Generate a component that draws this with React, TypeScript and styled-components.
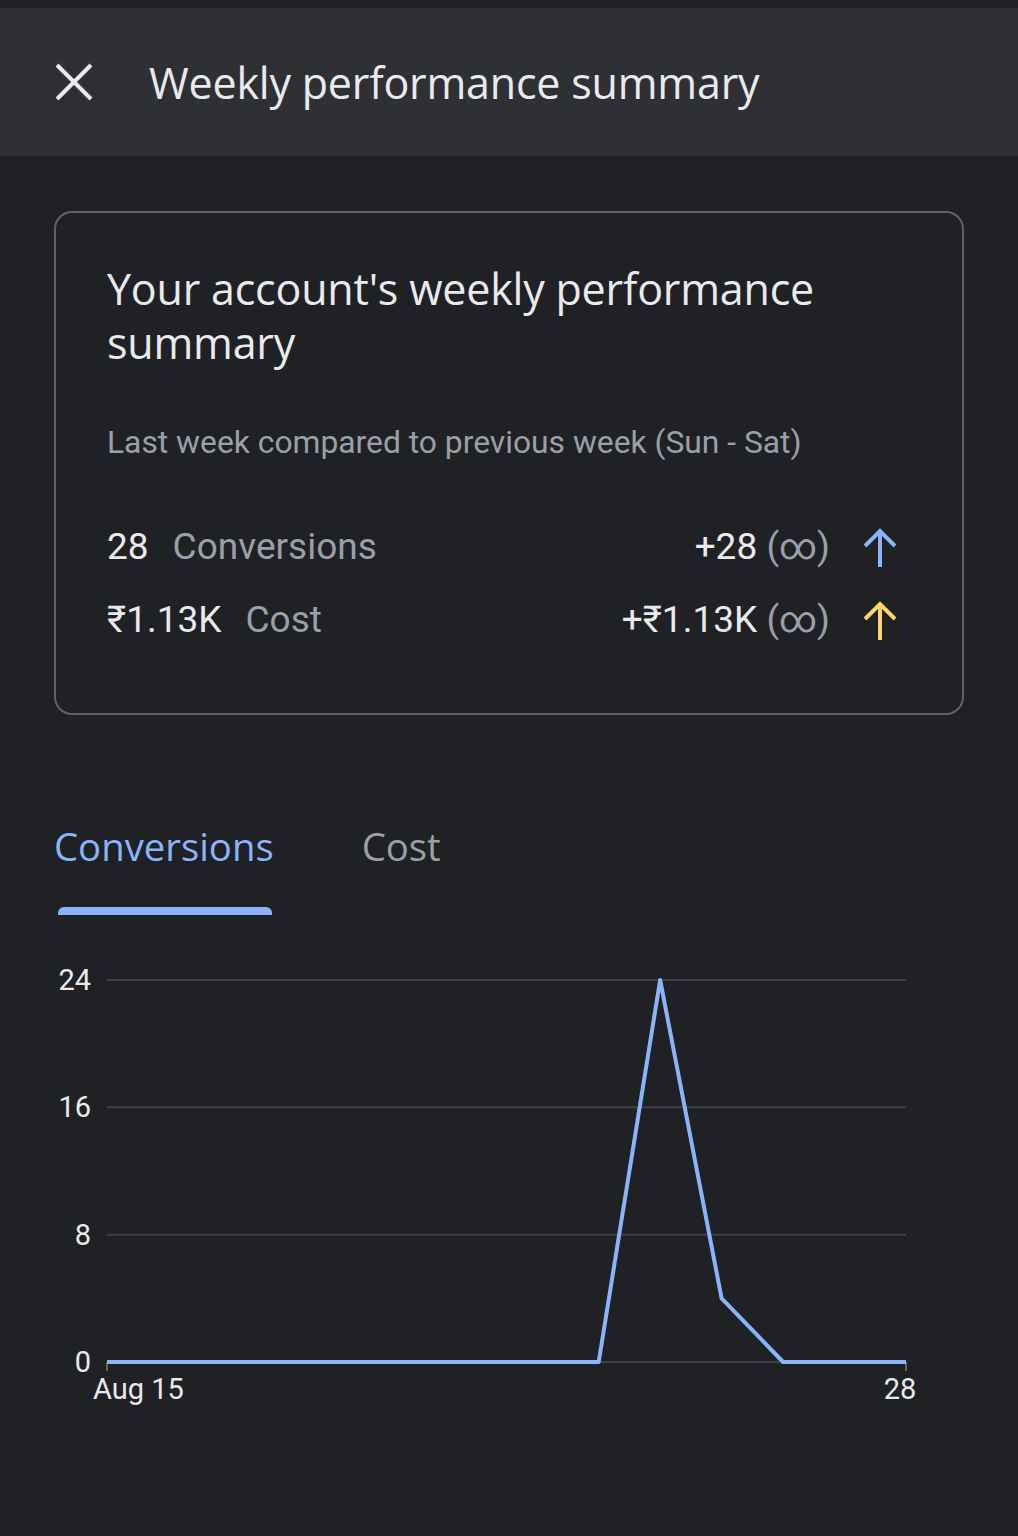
import React, { useState } from 'react'
import styled, { createGlobalStyle } from 'styled-components'

const GlobalStyle = createGlobalStyle`
    html, body {
        margin: 0;
        padding: 0;
        background: #202124;
        font-family: Roboto, "Liberation Sans", sans-serif;
        color: #e8eaed;
    }
`;

const Page = styled.div`
    width: 1018px;
    min-height: 1536px;
    background: #202124;
    padding-top: 8px;
    box-sizing: border-box;
`;

const Header = styled.header`
    height: 148px;
    background: #2f3034;
    display: flex;
    align-items: center;
    padding-left: 52px;
    gap: 53px;
`;

const CloseButton = styled.button`
    width: 44px;
    height: 44px;
    padding: 0;
    border: none;
    background: none;
    display: flex;
    align-items: center;
    justify-content: center;
    cursor: pointer;
`;

const HeaderTitle = styled.h1`
    margin: 0;
    font-family: "Open Sans", sans-serif;
    font-weight: 500;
    font-size: 43px;
    letter-spacing: -0.2px;
    color: #e8eaed;
`;

const Main = styled.main`
    padding: 55px 54px 0 54px;
`;

const Card = styled.section`
    border: 2px solid #5f6368;
    border-radius: 18px;
    padding: 49px 64px 57px 51px;
`;

const CardTitle = styled.h2`
    margin: 0;
    font-family: "Open Sans", sans-serif;
    font-weight: 500;
    font-size: 43px;
    line-height: 54px;
    letter-spacing: -0.2px;
    color: #e8eaed;
`;

const Subtitle = styled.p`
    margin: 53px 0 49px;
    font-size: 31.8px;
    color: #9aa0a6;
`;

const MetricRow = styled.div`
    display: flex;
    align-items: center;
    height: 73px;
    font-size: 37px;
`;

const Value = styled.span`
    color: #e8eaed;
`;

const Label = styled.span`
    color: #9aa0a6;
    margin-left: 24px;
`;

const Change = styled.span`
    margin-left: auto;
    color: #e8eaed;
`;

const Muted = styled.span`
    color: #9aa0a6;
`;

const ArrowBox = styled.span`
    display: flex;
    margin-left: 32px;
`;

const Tabs = styled.div`
    display: flex;
    gap: 88px;
    margin-top: 105px;
`;

const Tab = styled.button<{ $active?: boolean }>`
    position: relative;
    border: none;
    background: none;
    padding: 0 0 43px;
    font-family: "Open Sans", sans-serif;
    font-weight: 500;
    font-size: 38.3px;
    color: ${p => (p.$active ? '#8ab4f8' : '#9aa0a6')};
    cursor: pointer;
    &::after {
        content: '';
        display: ${p => (p.$active ? 'block' : 'none')};
        position: absolute;
        left: 4px;
        right: 2px;
        bottom: 0;
        height: 8px;
        border-radius: 6px 6px 0 0;
        background: #8ab4f8;
    }
`;

const ChartBox = styled.div`
    margin-top: 37px;
    margin-left: -54px;
`;

type Metric = {
    value: string;
    label: string;
    change: string;
    color: string;
}

const metrics: Metric[] = [
    { value: '28', label: 'Conversions', change: '+28', color: '#8ab4f8' },
    { value: '₹1.13K', label: 'Cost', change: '+₹1.13K', color: '#fdd663' },
];

const data = [0, 0, 0, 0, 0, 0, 0, 0, 0, 24, 4, 0, 0, 0];

const UpArrow = ({ color }: { color: string }) => (
    <svg width="36" height="40" viewBox="0 0 36 40">
        <path d="M18 4 V40 M3 19 L18 4 L33 19" stroke={color} strokeWidth="4" fill="none" />
    </svg>
)

const Chart = () => {
    const left = 107
    const right = 906
    const top = 28
    const bottom = 410
    const step = (right - left) / (data.length - 1)
    const y = (v: number) => bottom - (v / 24) * (bottom - top)
    const points = data.map((v, i) => `${left + i * step},${y(v)}`).join(' ')
    const ticks = [24, 16, 8, 0]

    return (
        <svg width="1018" height="470" viewBox="0 0 1018 470">
            {ticks.map(t => (
                <g key={t}>
                    <line x1={left} x2={right} y1={y(t)} y2={y(t)} stroke="#3c4043" strokeWidth="2" />
                    <text x="91" y={y(t) + 10} textAnchor="end" fill="#e8eaed"
                        fontFamily="Roboto, sans-serif" fontSize="29">{t}</text>
                </g>
            ))}
            <line x1={left} x2={left} y1={bottom} y2={bottom + 9} stroke="#5f6368" strokeWidth="2" />
            <line x1={right} x2={right} y1={bottom} y2={bottom + 9} stroke="#5f6368" strokeWidth="2" />
            <polyline points={points} fill="none" stroke="#8ab4f8" strokeWidth="4" strokeLinejoin="round" />
            <text x="93" y="447" fill="#e8eaed" fontFamily="Roboto, sans-serif" fontSize="29">Aug 15</text>
            <text x="900" y="447" textAnchor="middle" fill="#e8eaed" fontFamily="Roboto, sans-serif" fontSize="29">28</text>
        </svg>
    )
}

const App: React.FC = () => {
    const [ tab, setTab ] = useState('conversions');

    return (
        <Page>
            <GlobalStyle />
            <Header>
                <CloseButton aria-label="Close">
                    <svg width="40" height="40" viewBox="0 0 40 40">
                        <path d="M3 3 L37 37 M37 3 L3 37" stroke="#e8eaed" strokeWidth="4" />
                    </svg>
                </CloseButton>
                <HeaderTitle>Weekly performance summary</HeaderTitle>
            </Header>
            <Main>
                <Card>
                    <CardTitle>Your account's weekly performance summary</CardTitle>
                    <Subtitle>Last week compared to previous week (Sun - Sat)</Subtitle>
                    { metrics.map(m => (
                        <MetricRow key={m.label}>
                            <Value>{m.value}</Value>
                            <Label>{m.label}</Label>
                            <Change>{m.change} <Muted>(∞)</Muted></Change>
                            <ArrowBox><UpArrow color={m.color} /></ArrowBox>
                        </MetricRow>
                    )) }
                </Card>
                <Tabs>
                    <Tab $active={tab === 'conversions'} onClick={() => setTab('conversions')}>Conversions</Tab>
                    <Tab $active={tab === 'cost'} onClick={() => setTab('cost')}>Cost</Tab>
                </Tabs>
                <ChartBox>
                    <Chart />
                </ChartBox>
            </Main>
        </Page>
    )
}
export default App
